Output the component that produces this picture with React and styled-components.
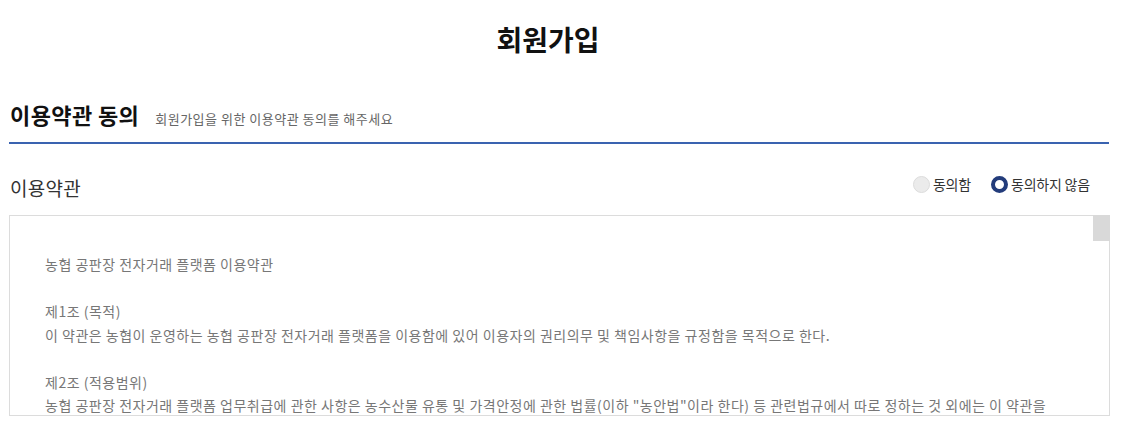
import React, { useState } from 'react'
import styled, { createGlobalStyle } from 'styled-components'

const GlobalStyle = createGlobalStyle`
    html, body {
        margin: 0;
        padding: 0;
        background: #fff;
    }
    body {
        font-family: "Noto Sans CJK KR", "Noto Sans", sans-serif;
        color: #333;
    }
`

const StyledPage = styled.div`
    width: 1101px;
    margin-left: 9px;
`

const StyledTitle = styled.h1`
    margin: 0;
    padding: 21px 23px 0 0;
    height: 70px;
    box-sizing: border-box;
    text-align: center;
    font-size: 28px;
    font-weight: 700;
    line-height: 36px;
    color: #111;
`

const StyledSectionHead = styled.div`
    display: flex;
    flex-direction: row;
    align-items: baseline;
    gap: 16px;
    padding: 27px 0 0 1px;
    height: 74px;
    box-sizing: border-box;
    border-bottom: 2px solid #3a63b0;
    width: 1100px;

    h2 {
        margin: 0;
        font-size: 22px;
        font-weight: 700;
        line-height: 34px;
        letter-spacing: 0.4px;
        color: #111;
    }
    span {
        font-size: 13px;
        letter-spacing: 0.5px;
        color: #666;
    }
`

const StyledTermsHead = styled.div`
    display: flex;
    flex-direction: row;
    justify-content: space-between;
    align-items: center;
    height: 71px;
    padding: 13px 20px 0 1px;
    box-sizing: border-box;

    h3 {
        margin: 0;
        font-size: 19px;
        font-weight: 400;
        letter-spacing: 0.3px;
        color: #333;
        margin-top: 2px;
    }
`

const StyledRadios = styled.div`
    display: flex;
    flex-direction: row;
    gap: 20px;
    margin-top: -4px;
`

const StyledRadioLabel = styled.label`
    display: flex;
    flex-direction: row;
    align-items: center;
    gap: 3px;
    font-size: 14px;
    letter-spacing: -0.2px;
    color: #333;
    cursor: pointer;
`

const StyledRadio = styled.input`
    appearance: none;
    margin: 0;
    width: 17px;
    height: 17px;
    border-radius: 50%;
    box-sizing: border-box;
    border: 1px solid #dcdcdc;
    background: #ebebeb;
    cursor: pointer;

    &:checked {
        border: 4px solid #233c7b;
        background: #fff;
    }
`

const StyledTermsWrap = styled.div`
    position: relative;
`

const StyledTermsBox = styled.div`
    height: 201px;
    box-sizing: border-box;
    border: 1px solid #dcdcdc;
    overflow-y: scroll;
    scrollbar-width: none;
    padding: 37px 52px 30px 35px;
    font-size: 14px;
    letter-spacing: 0.5px;
    line-height: 23.5px;
    color: #777;
    white-space: pre-wrap;

    &::-webkit-scrollbar {
        display: none;
    }
`

// 스크롤바 손잡이 (목록 위에 겹쳐 그림)
const StyledThumb = styled.div`
    position: absolute;
    top: 0;
    right: 0;
    width: 17px;
    height: 26px;
    background: #d9d9d9;
`

const terms = `농협 공판장 전자거래 플랫폼 이용약관

제1조 (목적)
이 약관은 농협이 운영하는 농협 공판장 전자거래 플랫폼을 이용함에 있어 이용자의 권리의무 및 책임사항을 규정함을 목적으로 한다.

제2조 (적용범위)
농협 공판장 전자거래 플랫폼 업무취급에 관한 사항은 농수산물 유통 및 가격안정에 관한 법률(이하 "농안법"이라 한다) 등 관련법규에서 따로 정하는 것 외에는 이 약관을 따른다.

제3조 (용어의 정의)
1. "플랫폼"이란 농협이 농수산물을 전자적 방식으로 거래할 수 있도록 설정한 가상의 영업장을 말한다.
2. "이용자"란 플랫폼에 접속하여 이 약관에 따라 농협이 제공하는 서비스를 받는 회원을 말한다.

제4조 (약관의 명시와 개정)
1. 농협은 이 약관의 내용과 상호, 영업소 소재지, 전화번호 등을 이용자가 알 수 있도록 플랫폼의 초기 화면에 게시한다.
2. 농협은 관련법규를 위배하지 않는 범위에서 이 약관을 개정할 수 있다.

제5조 (서비스의 제공 및 변경)
1. 농협은 다음과 같은 업무를 수행한다.
  가. 농수산물에 대한 정보 제공 및 전자거래
  나. 거래 체결 및 정산에 관한 업무

제6조 (서비스의 중단)
농협은 정보통신설비의 보수점검, 교체 및 고장, 통신의 두절 등의 사유가 발생한 경우에는 서비스의 제공을 일시적으로 중단할 수 있다.

제7조 (회원가입)
이용자는 농협이 정한 가입 양식에 따라 회원정보를 기입한 후 이 약관에 동의한다는 의사표시를 함으로서 회원가입을 신청한다.

제8조 (개인정보보호)
농협은 이용자의 개인정보 수집시 서비스제공을 위하여 필요한 범위에서 최소한의 개인정보를 수집한다.`

export default function App() {
    const [agree, setAgree] = useState('no')

    return (
        <>
            <GlobalStyle />
            <StyledPage>
                <StyledTitle>회원가입</StyledTitle>

                {/* 약관 동의 섹션 */}
                <StyledSectionHead>
                    <h2>이용약관 동의</h2>
                    <span>회원가입을 위한 이용약관 동의를 해주세요</span>
                </StyledSectionHead>

                <StyledTermsHead>
                    <h3>이용약관</h3>
                    <StyledRadios>
                        <StyledRadioLabel>
                            <StyledRadio
                                type='radio'
                                name='agree'
                                checked={agree === 'yes'}
                                onChange={() => setAgree('yes')}
                            />
                            동의함
                        </StyledRadioLabel>
                        <StyledRadioLabel>
                            <StyledRadio
                                type='radio'
                                name='agree'
                                checked={agree === 'no'}
                                onChange={() => setAgree('no')}
                            />
                            동의하지 않음
                        </StyledRadioLabel>
                    </StyledRadios>
                </StyledTermsHead>

                <StyledTermsWrap>
                    <StyledTermsBox>{terms}</StyledTermsBox>
                    <StyledThumb />
                </StyledTermsWrap>
            </StyledPage>
        </>
    )
}
